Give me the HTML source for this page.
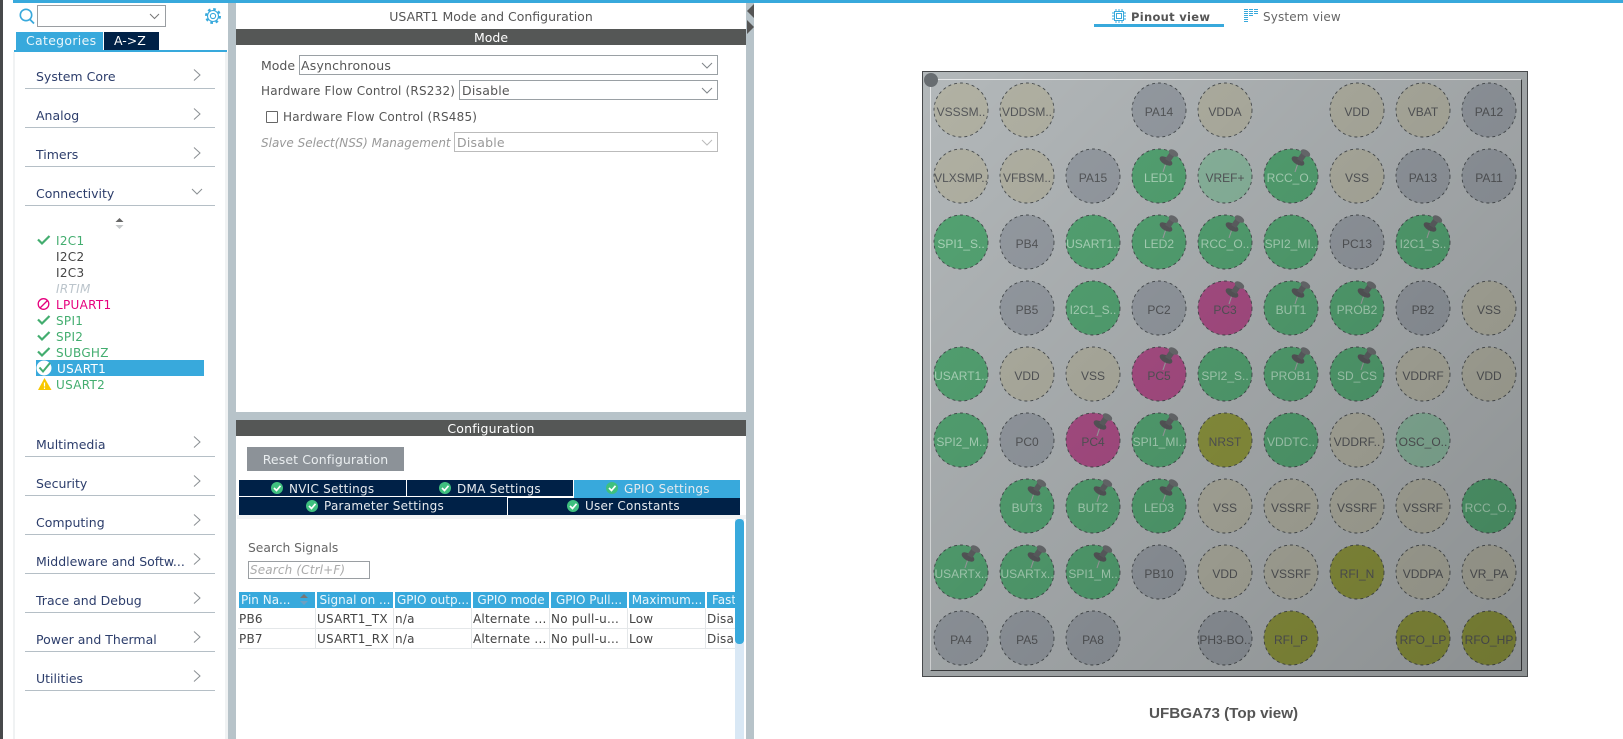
<!DOCTYPE html>
<html><head><meta charset="utf-8"><title>USART1</title>
<style>
html,body{margin:0;padding:0;background:#fff}
#p{position:relative;width:1623px;height:739px;overflow:hidden;background:#fff;font-family:"DejaVu Sans","Liberation Sans",sans-serif}
.a{position:absolute}
.t{position:absolute;white-space:nowrap;line-height:16px;font-size:12px;color:#555;margin-top:1px}
.c{color:#2c3d6b;font-size:12.5px;left:36px;letter-spacing:0}
.l{position:absolute;left:25px;width:190px;height:1px;background:#b5bfc6}
.i{font-size:12px;left:56px;letter-spacing:.3px}
.g{color:#43ad6f}
.s{position:absolute;border:1px solid #9aa0a4;box-sizing:border-box;height:20px;background:#fff}
.tab{position:absolute;background:#002147;color:#e6eaee;font-size:12px;line-height:16px;white-space:nowrap;letter-spacing:.25px}
.tab span{margin-top:1px}
.h{position:absolute;background:#38a9dc;color:#eaf6fb;font-size:12px;line-height:17px;height:16px;top:592px;white-space:nowrap;overflow:hidden;text-align:center}
.r{font-size:12px;color:#444;letter-spacing:.22px}
.v{position:absolute;width:1px;background:#e4e7e9;top:608px;height:41px}
svg{position:absolute;left:0;top:0;overflow:visible}
svg text{font-family:"Liberation Sans",Arial,sans-serif;font-size:12px;text-anchor:middle}
.b{fill:#b2b2a4}.y{fill:#979da4}.n{fill:#55a574}.m{fill:#ad4f88}.o{fill:#8f973f}
.b,.y,.n,.m,.o,.e{stroke:#3d4145;stroke-opacity:.9;stroke-width:.9;stroke-dasharray:3 3}
.d{fill:#55575a}.w{fill:#add8bc}
</style></head><body><div id="p">

<!-- frame -->
<div class="a" style="left:0;top:0;width:3px;height:739px;background:#47494b"></div>
<div class="a" style="left:13px;top:0;width:1610px;height:3px;background:#38a9dc"></div>
<div class="a" style="left:13px;top:52px;width:2px;height:687px;background:#f0f2f3"></div>
<div class="a" style="left:225px;top:52px;width:3px;height:687px;background:#f0f2f3"></div>
<div class="a" style="left:228px;top:3px;width:8px;height:736px;background:#b7c3c9"></div>
<div class="a" style="left:746px;top:3px;width:8px;height:736px;background:#b7c3c9"></div>
<div class="a" style="left:236px;top:412px;width:510px;height:8px;background:#b7c3c9"></div>

<!-- sidebar top -->
<div class="a" style="left:37px;top:5px;width:129px;height:22px;border:1px solid #9a9ea2;box-sizing:border-box"></div>
<div class="a" style="left:16px;top:32px;width:87px;height:18px;background:#38a9dc"></div>
<div class="a" style="left:104px;top:32px;width:55px;height:18px;background:#002147"></div>
<div class="a" style="left:14px;top:50px;width:213px;height:2px;background:#38a9dc"></div>
<div class="t" style="left:26px;top:32px;color:#eaf6fb;font-size:12.5px;letter-spacing:.3px">Categories</div>
<div class="t" style="left:114px;top:32px;color:#fff;font-size:12.5px">A-&gt;Z</div>

<div class="t c" style="top:68px">System Core</div><div class="l" style="top:88px"></div>
<div class="t c" style="top:107px">Analog</div><div class="l" style="top:127px"></div>
<div class="t c" style="top:146px">Timers</div><div class="l" style="top:166px"></div>
<div class="t c" style="top:185px">Connectivity</div><div class="l" style="top:205px"></div>
<div class="t c" style="top:436px">Multimedia</div><div class="l" style="top:456px"></div>
<div class="t c" style="top:475px">Security</div><div class="l" style="top:495px"></div>
<div class="t c" style="top:514px">Computing</div><div class="l" style="top:534px"></div>
<div class="t c" style="top:553px">Middleware and Softw...</div><div class="l" style="top:573px"></div>
<div class="t c" style="top:592px">Trace and Debug</div><div class="l" style="top:612px"></div>
<div class="t c" style="top:631px">Power and Thermal</div><div class="l" style="top:651px"></div>
<div class="t c" style="top:670px">Utilities</div><div class="l" style="top:690px"></div>

<div class="a" style="left:36px;top:360px;width:168px;height:16px;background:#38a9dc"></div>
<div class="t i g" style="top:232px">I2C1</div>
<div class="t i" style="top:248px;color:#444">I2C2</div>
<div class="t i" style="top:264px;color:#444">I2C3</div>
<div class="t i" style="top:280px;color:#bcc5cc;font-style:italic">IRTIM</div>
<div class="t i" style="top:296px;color:#e6007e">LPUART1</div>
<div class="t i g" style="top:312px">SPI1</div>
<div class="t i g" style="top:328px">SPI2</div>
<div class="t i g" style="top:344px">SUBGHZ</div>
<div class="t i" style="top:360px;left:57px;color:#fff">USART1</div>
<div class="t i g" style="top:376px">USART2</div>

<!-- middle top -->
<div class="t" style="left:236px;width:510px;text-align:center;top:8px;font-size:12.5px;color:#555">USART1 Mode and Configuration</div>
<div class="a" style="left:236px;top:29px;width:510px;height:16px;background:#555756"></div>
<div class="t" style="left:236px;width:510px;text-align:center;top:29px;color:#fff;font-size:12.5px">Mode</div>
<div class="t" style="left:261px;top:57px;font-size:12.5px">Mode</div>
<div class="s" style="left:299px;top:55px;width:419px"></div>
<div class="t" style="left:301px;top:57px;font-size:12.5px;letter-spacing:.2px">Asynchronous</div>
<div class="t" style="left:261px;top:82px;font-size:12px;letter-spacing:.2px">Hardware Flow Control (RS232)</div>
<div class="s" style="left:459px;top:80px;width:259px"></div>
<div class="t" style="left:462px;top:82px;font-size:12.5px;letter-spacing:.2px">Disable</div>
<div class="a" style="left:266px;top:111px;width:12px;height:12px;border:1px solid #666;box-sizing:border-box;border-radius:1px"></div>
<div class="t" style="left:283px;top:108px;font-size:12px;letter-spacing:.2px">Hardware Flow Control (RS485)</div>
<div class="t" style="left:261px;top:134px;font-size:12px;font-style:italic;color:#999">Slave Select(NSS) Management</div>
<div class="s" style="left:454px;top:132px;width:264px;border-color:#bbb"></div>
<div class="t" style="left:457px;top:134px;font-size:12.5px;color:#999;letter-spacing:.2px">Disable</div>

<!-- config -->
<div class="a" style="left:236px;top:420px;width:510px;height:16px;background:#555756"></div>
<div class="t" style="left:236px;width:510px;text-align:center;top:420px;color:#fff;font-size:12.5px;letter-spacing:.2px">Configuration</div>
<div class="a" style="left:247px;top:447px;width:157px;height:24px;background:#8c9298"></div>
<div class="t" style="left:247px;width:157px;text-align:center;top:451px;color:#e9edef;font-size:12.5px;letter-spacing:.1px">Reset Configuration</div>

<div class="tab" style="left:239px;top:480px;width:167px;height:16px"><span class="a" style="left:50px">NVIC Settings</span></div>
<div class="tab" style="left:407px;top:480px;width:166px;height:16px"><span class="a" style="left:50px">DMA Settings</span></div>
<div class="tab" style="left:574px;top:480px;width:166px;height:18px;background:#38a9dc"><span class="a" style="left:50px">GPIO Settings</span></div>
<div class="tab" style="left:239px;top:497px;width:268px;height:18px"><span class="a" style="left:85px;top:0">Parameter Settings</span></div>
<div class="tab" style="left:508px;top:498px;width:232px;height:17px"><span class="a" style="left:77px;top:-1px">User Constants</span></div>
<div class="a" style="left:237px;top:515px;width:509px;height:4px;background:#f2f4f5"></div>

<div class="t" style="left:248px;top:539px;font-size:12.3px;color:#666">Search Signals</div>
<div class="a" style="left:248px;top:561px;width:122px;height:18px;border:1px solid #9a9ea2;box-sizing:border-box"></div>
<div class="t" style="left:250px;top:562px;margin-top:0;font-style:italic;color:#aaa;font-size:12px;letter-spacing:.15px">Search (Ctrl+F)</div>

<div class="h" style="left:239px;width:76px;text-align:left;padding-left:2px;box-sizing:border-box">Pin Na...</div>
<div class="h" style="left:317px;width:76px">Signal on ...</div>
<div class="h" style="left:395px;width:76px">GPIO outp...</div>
<div class="h" style="left:473px;width:76px">GPIO mode</div>
<div class="h" style="left:551px;width:76px">GPIO Pull...</div>
<div class="h" style="left:629px;width:76px">Maximum...</div>
<div class="h" style="left:707px;width:28px;padding-left:5px;box-sizing:border-box;text-align:left">Fast</div>

<div class="t r" style="left:239px;top:610px">PB6</div><div class="t r" style="left:317px;top:610px">USART1_TX</div><div class="t r" style="left:395px;top:610px">n/a</div><div class="t r" style="left:473px;top:610px">Alternate ...</div><div class="t r" style="left:551px;top:610px">No pull-u...</div><div class="t r" style="left:629px;top:610px">Low</div>
<div class="t r" style="left:707px;top:610px;width:28px;overflow:hidden">Disable</div>
<div class="t r" style="left:239px;top:630px">PB7</div><div class="t r" style="left:317px;top:630px">USART1_RX</div><div class="t r" style="left:395px;top:630px">n/a</div><div class="t r" style="left:473px;top:630px">Alternate ...</div><div class="t r" style="left:551px;top:630px">No pull-u...</div><div class="t r" style="left:629px;top:630px">Low</div>
<div class="t r" style="left:707px;top:630px;width:28px;overflow:hidden">Disable</div>
<div class="a" style="left:238px;top:628px;width:497px;height:1px;background:#e4e7e9"></div>
<div class="a" style="left:238px;top:648px;width:497px;height:1px;background:#e4e7e9"></div>
<div class="v" style="left:315px"></div><div class="v" style="left:393px"></div><div class="v" style="left:471px"></div><div class="v" style="left:549px"></div><div class="v" style="left:627px"></div><div class="v" style="left:705px"></div>
<div class="a" style="left:735px;top:519px;width:9px;height:220px;background:#d9e8f5"></div>
<div class="a" style="left:735px;top:519px;width:9px;height:125px;background:#38a9dc;border-radius:4px"></div>

<!-- view header -->
<div class="a" style="left:1094px;top:24px;width:130px;height:3px;background:#38a9dc"></div>
<div class="t" style="left:1131px;top:9px;margin-top:0;font-weight:bold;font-size:11.5px;color:#555;letter-spacing:.3px">Pinout view</div>
<div class="t" style="left:1263px;top:9px;margin-top:0;font-size:12px;color:#666;letter-spacing:.15px">System view</div>
<div class="t" style="left:1149px;top:705px;font-family:'Liberation Sans',sans-serif;font-weight:bold;font-size:15.2px;color:#555">UFBGA73 (Top view)</div>

<!-- chip -->
<div class="a" style="left:922px;top:71px;width:606px;height:606px;box-sizing:border-box;border:1px solid #47494b;background:#b3b8ba"></div>
<div class="a" style="left:930px;top:79px;width:592px;height:592px;box-sizing:border-box;border:1px solid #e4e6e7;border-right-color:#3e4042;border-bottom-color:#3e4042"></div>

<svg width="1623" height="739" viewBox="0 0 1623 739">
<defs>
<linearGradient id="ov" x1="0" y1="0" x2="1" y2="1"><stop offset="0" stop-color="#000" stop-opacity="0"/><stop offset="1" stop-color="#000" stop-opacity=".22"/></linearGradient>
<g id="pin">
<path d="M4-4L7-13" stroke="#a2a4a6" stroke-width="1.1" fill="none"/>
<ellipse cx="7" cy="-15" rx="7" ry="3.600" transform="rotate(30 7 -15)" fill="#58595c"/>
<path d="M6-17L11-24L16-21L11-14Z" fill="#606265"/>
<ellipse cx="14.500" cy="-23" rx="5.200" ry="3" transform="rotate(32 14.500 -23)" fill="#6c6e71"/>
</g>
</defs>

<!-- sidebar icons -->
<circle cx="26" cy="15" r="5.7" fill="none" stroke="#38a9dc" stroke-width="1.6"/><path d="M30 19.5L34 23.5" stroke="#38a9dc" stroke-width="1.8"/>
<path d="M150 14L154.500 18.500L159 14" fill="none" stroke="#777" stroke-width="1"/>
<g fill="none" stroke="#38a9dc"><circle cx="213" cy="16" r="6.8" stroke-width="2.400" stroke-dasharray="2.600 2.740"/><circle cx="213" cy="16" r="5.500" stroke-width="1.100"/><circle cx="213" cy="16" r="2.600" stroke-width="1.100"/></g>
<g fill="none" stroke="#8a8f93" stroke-width="1"><path d="M194 69.500L200 75L194 80.500"/><path d="M194 108.500L200 114L194 119.500"/><path d="M194 147.500L200 153L194 158.500"/><path d="M192 189L197 194L202 189"/>
<path d="M194 436.500L200 442L194 447.500"/><path d="M194 475.500L200 481L194 486.500"/><path d="M194 514.500L200 520L194 525.500"/><path d="M194 553.500L200 559L194 564.500"/><path d="M194 592.500L200 598L194 603.500"/><path d="M194 631.500L200 637L194 642.500"/><path d="M194 670.500L200 676L194 681.500"/></g>
<path d="M115.500 222L119.500 218L123.500 222Z" fill="#666"/><path d="M115.500 225L119.500 229L123.500 225Z" fill="#c5c8ca"/>
<g fill="none" stroke="#43ad6f" stroke-width="2.200"><path d="M38 239.500L42 243.500L49.500 236"/><path d="M38 319.500L42 323.500L49.500 316"/><path d="M38 335.500L42 339.500L49.500 332"/><path d="M38 351.500L42 355.500L49.500 348"/></g>
<circle cx="43.500" cy="304" r="5.300" fill="none" stroke="#e6007e" stroke-width="1.300"/><path d="M40 308L47.500 300.500" stroke="#e6007e" stroke-width="1.300"/>
<circle cx="44" cy="368" r="7.500" fill="#fff"/><path d="M39.500 367.500L43 371.500L50 363" fill="none" stroke="#43ad6f" stroke-width="2"/>
<path d="M44.500 378L51.500 390H38Z" fill="#f8c800"/><path d="M44.500 382.500V386.500M44.500 387.500V389" stroke="#fff" stroke-width="1.200"/>

<!-- select chevrons -->
<g fill="none" stroke="#7f8488" stroke-width="1"><path d="M702 63L707 68L712 63"/><path d="M702 88L707 93L712 88"/><path d="M702 140L707 145L712 140" stroke="#bbb"/></g>
<!-- splitter -->
<path d="M747 11L754 4V18Z" fill="#555"/><path d="M754 27L747 20V34Z" fill="#555"/>
<!-- tab checks -->
<g fill="#3fc07f"><circle cx="277" cy="488" r="6"/><circle cx="445" cy="488" r="6"/><circle cx="612" cy="488" r="6"/><circle cx="312" cy="506" r="6"/><circle cx="573" cy="506" r="6"/></g>
<g fill="none" stroke="#fff" stroke-width="1.700"><path d="M274 488L276.500 490.500L280.500 485.800"/><path d="M442 488L444.500 490.500L448.500 485.800"/><path d="M609 488L611.500 490.500L615.500 485.800"/><path d="M309 506L311.500 508.500L315.500 503.800"/><path d="M570 506L572.500 508.500L576.500 503.800"/></g>
<path d="M300 598L304 594L308 598Z" fill="#777"/><path d="M300 601L304 605L308 601Z" fill="#6f9fc0"/>
<!-- view icons -->
<g fill="none" stroke="#38a9dc"><rect x="1114.500" y="11.500" width="9" height="9" stroke-width="1"/><rect x="1116.500" y="13.500" width="5" height="5" stroke-width="1"/><path d="M1112 13H1114M1112 16H1114M1112 19H1114M1124 13H1126M1124 16H1126M1124 19H1126M1116 9V11M1119 9V11M1122 9V11M1116 21V23M1119 21V23M1122 21V23" stroke-width="1"/></g>
<g stroke="#38a9dc" stroke-width="1"><path d="M1244 9.500H1248M1244 11.500H1248M1244 13.500H1248M1244 15.500H1248M1244 17.500H1248M1244 19.500H1248M1244 21.500H1248M1249 9.500H1253M1249 11.500H1253M1249 13.500H1253M1249 15.500H1253M1254 9.500H1258M1254 11.500H1258M1254 13.500H1258"/></g>

<!-- balls -->
<circle cx="931" cy="80" r="7" fill="#686d71"/>
<circle class="b" cx="961" cy="110" r="27"/><text class="d" x="961" y="116">VSSSM..</text>
<circle class="b" cx="1027" cy="110" r="27"/><text class="d" x="1027" y="116">VDDSM..</text>
<circle class="y" cx="1159" cy="110" r="27"/><text class="d" x="1159" y="116">PA14</text>
<circle class="b" cx="1225" cy="110" r="27"/><text class="d" x="1225" y="116">VDDA</text>
<circle class="b" cx="1357" cy="110" r="27"/><text class="d" x="1357" y="116">VDD</text>
<circle class="b" cx="1423" cy="110" r="27"/><text class="d" x="1423" y="116">VBAT</text>
<circle class="y" cx="1489" cy="110" r="27"/><text class="d" x="1489" y="116">PA12</text>

<circle class="b" cx="961" cy="176" r="27"/><text class="d" x="961" y="182">VLXSMP..</text>
<circle class="b" cx="1027" cy="176" r="27"/><text class="d" x="1027" y="182">VFBSM..</text>
<circle class="y" cx="1093" cy="176" r="27"/><text class="d" x="1093" y="182">PA15</text>
<circle class="n" cx="1159" cy="176" r="27"/><text class="w" x="1159" y="182">LED1</text><use href="#pin" x="1159" y="176"/>
<circle class="e" cx="1225" cy="176" r="27" fill="#8cb8a0"/><text class="d" x="1225" y="182">VREF+</text>
<circle class="n" cx="1291" cy="176" r="27"/><text class="w" x="1291" y="182">RCC_O..</text><use href="#pin" x="1291" y="176"/>
<circle class="b" cx="1357" cy="176" r="27"/><text class="d" x="1357" y="182">VSS</text>
<circle class="y" cx="1423" cy="176" r="27"/><text class="d" x="1423" y="182">PA13</text>
<circle class="y" cx="1489" cy="176" r="27"/><text class="d" x="1489" y="182">PA11</text>

<circle class="n" cx="961" cy="242" r="27"/><text class="w" x="961" y="248">SPI1_S..</text>
<circle class="y" cx="1027" cy="242" r="27"/><text class="d" x="1027" y="248">PB4</text>
<circle class="n" cx="1093" cy="242" r="27"/><text class="w" x="1093" y="248">USART1..</text>
<circle class="n" cx="1159" cy="242" r="27"/><text class="w" x="1159" y="248">LED2</text><use href="#pin" x="1159" y="242"/>
<circle class="n" cx="1225" cy="242" r="27"/><text class="w" x="1225" y="248">RCC_O..</text><use href="#pin" x="1225" y="242"/>
<circle class="n" cx="1291" cy="242" r="27"/><text class="w" x="1291" y="248">SPI2_MI..</text>
<circle class="y" cx="1357" cy="242" r="27"/><text class="d" x="1357" y="248">PC13</text>
<circle class="n" cx="1423" cy="242" r="27"/><text class="w" x="1423" y="248">I2C1_S..</text><use href="#pin" x="1423" y="242"/>

<circle class="y" cx="1027" cy="308" r="27"/><text class="d" x="1027" y="314">PB5</text>
<circle class="n" cx="1093" cy="308" r="27"/><text class="w" x="1093" y="314">I2C1_S..</text>
<circle class="y" cx="1159" cy="308" r="27"/><text class="d" x="1159" y="314">PC2</text>
<circle class="m" cx="1225" cy="308" r="27"/><text class="d" x="1225" y="314">PC3</text><use href="#pin" x="1225" y="308"/>
<circle class="n" cx="1291" cy="308" r="27"/><text class="w" x="1291" y="314">BUT1</text><use href="#pin" x="1291" y="308"/>
<circle class="n" cx="1357" cy="308" r="27"/><text class="w" x="1357" y="314">PROB2</text><use href="#pin" x="1357" y="308"/>
<circle class="y" cx="1423" cy="308" r="27"/><text class="d" x="1423" y="314">PB2</text>
<circle class="b" cx="1489" cy="308" r="27"/><text class="d" x="1489" y="314">VSS</text>

<circle class="n" cx="961" cy="374" r="27"/><text class="w" x="961" y="380">USART1..</text>
<circle class="b" cx="1027" cy="374" r="27"/><text class="d" x="1027" y="380">VDD</text>
<circle class="b" cx="1093" cy="374" r="27"/><text class="d" x="1093" y="380">VSS</text>
<circle class="m" cx="1159" cy="374" r="27"/><text class="d" x="1159" y="380">PC5</text><use href="#pin" x="1159" y="374"/>
<circle class="n" cx="1225" cy="374" r="27"/><text class="w" x="1225" y="380">SPI2_S..</text>
<circle class="n" cx="1291" cy="374" r="27"/><text class="w" x="1291" y="380">PROB1</text><use href="#pin" x="1291" y="374"/>
<circle class="n" cx="1357" cy="374" r="27"/><text class="w" x="1357" y="380">SD_CS</text><use href="#pin" x="1357" y="374"/>
<circle class="b" cx="1423" cy="374" r="27"/><text class="d" x="1423" y="380">VDDRF</text>
<circle class="b" cx="1489" cy="374" r="27"/><text class="d" x="1489" y="380">VDD</text>

<circle class="n" cx="961" cy="440" r="27"/><text class="w" x="961" y="446">SPI2_M..</text>
<circle class="y" cx="1027" cy="440" r="27"/><text class="d" x="1027" y="446">PC0</text>
<circle class="m" cx="1093" cy="440" r="27"/><text class="d" x="1093" y="446">PC4</text><use href="#pin" x="1093" y="440"/>
<circle class="n" cx="1159" cy="440" r="27"/><text class="w" x="1159" y="446">SPI1_MI..</text><use href="#pin" x="1159" y="440"/>
<circle class="o" cx="1225" cy="440" r="27"/><text class="d" x="1225" y="446">NRST</text>
<circle class="n" cx="1291" cy="440" r="27"/><text class="w" x="1291" y="446">VDDTC..</text>
<circle class="b" cx="1357" cy="440" r="27"/><text class="d" x="1357" y="446">VDDRF..</text>
<circle class="e" cx="1423" cy="440" r="27" fill="#8cb8a0"/><text class="d" x="1423" y="446">OSC_O..</text>

<circle class="n" cx="1027" cy="506" r="27"/><text class="w" x="1027" y="512">BUT3</text><use href="#pin" x="1027" y="506"/>
<circle class="n" cx="1093" cy="506" r="27"/><text class="w" x="1093" y="512">BUT2</text><use href="#pin" x="1093" y="506"/>
<circle class="n" cx="1159" cy="506" r="27"/><text class="w" x="1159" y="512">LED3</text><use href="#pin" x="1159" y="506"/>
<circle class="b" cx="1225" cy="506" r="27"/><text class="d" x="1225" y="512">VSS</text>
<circle class="b" cx="1291" cy="506" r="27"/><text class="d" x="1291" y="512">VSSRF</text>
<circle class="b" cx="1357" cy="506" r="27"/><text class="d" x="1357" y="512">VSSRF</text>
<circle class="b" cx="1423" cy="506" r="27"/><text class="d" x="1423" y="512">VSSRF</text>
<circle class="n" cx="1489" cy="506" r="27"/><text class="w" x="1489" y="512">RCC_O..</text>

<circle class="n" cx="961" cy="572" r="27"/><text class="w" x="961" y="578">USARTx..</text><use href="#pin" x="961" y="572"/>
<circle class="n" cx="1027" cy="572" r="27"/><text class="w" x="1027" y="578">USARTx..</text><use href="#pin" x="1027" y="572"/>
<circle class="n" cx="1093" cy="572" r="27"/><text class="w" x="1093" y="578">SPI1_M..</text><use href="#pin" x="1093" y="572"/>
<circle class="y" cx="1159" cy="572" r="27"/><text class="d" x="1159" y="578">PB10</text>
<circle class="b" cx="1225" cy="572" r="27"/><text class="d" x="1225" y="578">VDD</text>
<circle class="b" cx="1291" cy="572" r="27"/><text class="d" x="1291" y="578">VSSRF</text>
<circle class="o" cx="1357" cy="572" r="27"/><text class="d" x="1357" y="578">RFI_N</text>
<circle class="b" cx="1423" cy="572" r="27"/><text class="d" x="1423" y="578">VDDPA</text>
<circle class="b" cx="1489" cy="572" r="27"/><text class="d" x="1489" y="578">VR_PA</text>

<circle class="y" cx="961" cy="638" r="27"/><text class="d" x="961" y="644">PA4</text>
<circle class="y" cx="1027" cy="638" r="27"/><text class="d" x="1027" y="644">PA5</text>
<circle class="y" cx="1093" cy="638" r="27"/><text class="d" x="1093" y="644">PA8</text>
<circle class="y" cx="1225" cy="638" r="27"/><text class="d" x="1225" y="644">PH3-BO..</text>
<circle class="o" cx="1291" cy="638" r="27"/><text class="d" x="1291" y="644">RFI_P</text>
<circle class="o" cx="1423" cy="638" r="27"/><text class="d" x="1423" y="644">RFO_LP</text>
<circle class="o" cx="1489" cy="638" r="27"/><text class="d" x="1489" y="644">RFO_HP</text>

<rect x="923" y="72" width="604" height="604" fill="url(#ov)"/>
</svg>
</div></body></html>
